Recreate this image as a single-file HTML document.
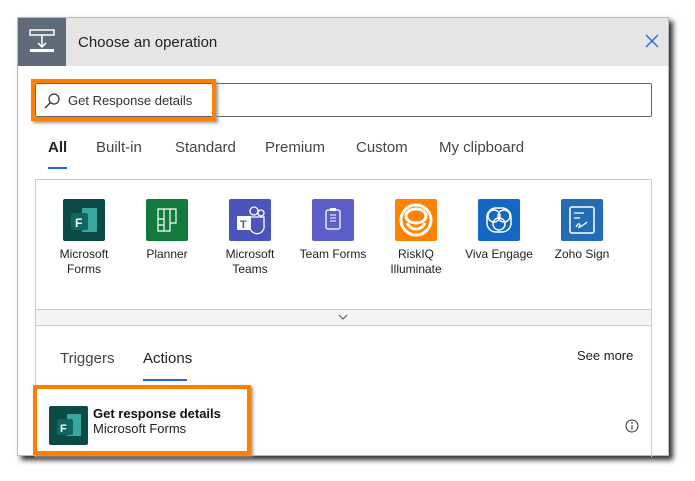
<!DOCTYPE html>
<html><head><style>
*{margin:0;padding:0;box-sizing:border-box}
body{width:695px;height:481px;background:#fff;position:relative;font-family:"Liberation Sans",sans-serif;overflow:hidden;color:#222}
.dlg{position:absolute;left:17px;top:17px;width:652px;height:439px;background:#fff;border:1px solid #bbb;box-shadow:4px 4px 5px #333}
.hdr{position:absolute;left:0;top:0;width:650px;height:48px;background:#e6e6e6}
.hic{position:absolute;left:0;top:0;width:48px;height:48px;background:#5f6b78}
.ab{position:absolute;font-size:12px;color:#222;text-align:center;width:80px;line-height:15px}
.ico{position:absolute;width:42px;height:42px;border-radius:2px;top:199px}
.tab{position:absolute;top:139px;font-size:15px;color:#444}
</style></head><body>
<div class="dlg">
 <div class="hdr">
  <div class="hic"><svg width="48" height="48"><rect x="12" y="12" width="24" height="5" fill="none" stroke="#fff" stroke-width="1.5"/><path d="M24 17v12M20 25l4 4 4-4" stroke="#fff" fill="none" stroke-width="1.5"/><rect x="12" y="31" width="24" height="3" fill="#fff"/></svg></div>
  <div style="position:absolute;left:60px;top:16px;font-size:15px;color:#222">Choose an operation</div>
  <svg style="position:absolute;left:626px;top:15px" width="16" height="16"><path d="M2 2l12 12M14 2L2 14" stroke="#2a6fdb" stroke-width="1.5"/></svg>
 </div>
</div>
<div style="position:absolute;left:35px;top:83px;width:617px;height:34px;border:1px solid #666;border-radius:2px"></div>
<div style="position:absolute;left:31px;top:79px;width:185px;height:42px;border:4px solid #ff8000;box-shadow:2px 2px 3px #999"></div>
<svg style="position:absolute;left:44px;top:93px" width="16" height="16"><circle cx="10" cy="6" r="5" fill="none" stroke="#333" stroke-width="1.2"/><path d="M6.5 9.5L1 15" stroke="#333" stroke-width="1.3"/></svg>
<div style="position:absolute;left:68px;top:93px;font-size:13px;color:#333">Get Response details</div>
<div class="tab" style="left:48px;color:#222;font-weight:bold">All</div>
<div style="position:absolute;left:48px;top:167px;width:19px;height:2px;background:#2266e3"></div>
<div class="tab" style="left:96px">Built-in</div>
<div class="tab" style="left:175px">Standard</div>
<div class="tab" style="left:265px">Premium</div>
<div class="tab" style="left:356px">Custom</div>
<div class="tab" style="left:439px">My clipboard</div>
<div style="position:absolute;left:35px;top:179px;width:617px;height:278px;border:1px solid #ccc;border-bottom:none"></div>
<div class="ico" style="left:63px;background:#0c4a45"><svg width="42" height="42"><rect x="19" y="9" width="15" height="24" fill="#3aa6a0"/><rect x="8" y="14" width="17" height="17" rx="2" fill="#11665f"/><text x="12" y="28" font-size="12" font-weight="bold" fill="#fff" font-family="Liberation Sans">F</text></svg></div>
<div class="ico" style="left:146px;background:#137a3e"><svg width="42" height="42"><path d="M12 10h18v14h-6v8h-12z M18 10v22 M24 10v14 M12 20h6 M12 26h6" fill="none" stroke="#fff" stroke-width="1.2"/></svg></div>
<div class="ico" style="left:229px;background:#4b53bc"><svg width="42" height="42"><circle cx="25" cy="12" r="4" fill="none" stroke="#fff" stroke-width="1.3"/><circle cx="32" cy="14" r="3" fill="none" stroke="#fff" stroke-width="1.3"/><path d="M19 18h16v8a7 7 0 0 1-14 3" fill="none" stroke="#fff" stroke-width="1.3"/><rect x="8" y="17" width="14" height="14" rx="1" fill="#fff"/><text x="11" y="29" font-size="11" font-weight="bold" fill="#4b53bc" font-family="Liberation Sans">T</text></svg></div>
<div class="ico" style="left:312px;background:#5b5fc7"><svg width="42" height="42"><rect x="14" y="11" width="14" height="19" rx="2" fill="none" stroke="#fff" stroke-width="1.3"/><path d="M18 16h6M18 19h6M18 22h6" stroke="#fff"/><rect x="18" y="9" width="6" height="3" fill="#fff"/></svg></div>
<div class="ico" style="left:395px;background:#ff8200"><svg width="42" height="42"><g fill="none" stroke="#fff" stroke-width="3"><circle cx="21" cy="21" r="15"/><ellipse cx="21" cy="17" rx="10" ry="7"/><path d="M12 24c4 8 14 8 18 0"/></g></svg></div>
<div class="ico" style="left:478px;background:#1568c2"><svg width="42" height="42"><g fill="none" stroke="#fff" stroke-width="1.5"><circle cx="16" cy="17" r="6"/><circle cx="26" cy="17" r="6"/><circle cx="21" cy="25" r="6"/><rect x="9" y="9" width="24" height="24" rx="9"/></g></svg></div>
<div class="ico" style="left:561px;background:#226db4"><svg width="42" height="42"><rect x="9" y="8" width="24" height="26" rx="2" fill="none" stroke="#fff" stroke-width="1.5"/><path d="M13 14h10M13 19h6M15 28c3-6 5-2 3 0s6-3 8-5" fill="none" stroke="#fff" stroke-width="1.3"/></svg></div>
<div class="ab" style="left:44px;top:247px">Microsoft<br>Forms</div>
<div class="ab" style="left:127px;top:247px">Planner</div>
<div class="ab" style="left:210px;top:247px">Microsoft<br>Teams</div>
<div class="ab" style="left:293px;top:247px">Team Forms</div>
<div class="ab" style="left:376px;top:247px">RiskIQ<br>Illuminate</div>
<div class="ab" style="left:459px;top:247px">Viva Engage</div>
<div class="ab" style="left:542px;top:247px">Zoho Sign</div>
<div style="position:absolute;left:36px;top:309px;width:615px;height:17px;background:#f4f4f4;border-top:1px solid #ccc;border-bottom:1px solid #ccc"></div>
<svg style="position:absolute;left:338px;top:313px" width="10" height="8"><path d="M1 2l4 4 4-4" fill="none" stroke="#555"/></svg>
<div class="tab" style="left:60px;top:350px">Triggers</div>
<div class="tab" style="left:143px;top:350px;color:#222">Actions</div>
<div style="position:absolute;left:143px;top:379px;width:44px;height:2px;background:#2266e3"></div>
<div style="position:absolute;left:577px;top:348px;font-size:13px;color:#222">See more</div>
<div style="position:absolute;left:33px;top:385px;width:218px;height:70px;border:4px solid #ff8000;box-shadow:2px 2px 3px #999;background:#fff"></div>
<div style="position:absolute;left:49px;top:406px;width:39px;height:39px;background:#0c4a45;border-radius:2px"><svg width="39" height="39"><rect x="18" y="8" width="14" height="22" fill="#3aa6a0"/><rect x="8" y="13" width="16" height="16" rx="2" fill="#11665f"/><text x="11" y="26" font-size="11" font-weight="bold" fill="#fff" font-family="Liberation Sans">F</text></svg></div>
<div style="position:absolute;left:93px;top:406px;font-size:13px;font-weight:bold;color:#111">Get response details</div>
<div style="position:absolute;left:93px;top:421px;font-size:13px;color:#222">Microsoft Forms</div>
<svg style="position:absolute;left:625px;top:419px" width="14" height="14"><circle cx="7" cy="7" r="6" fill="none" stroke="#333"/><path d="M7 6v5" stroke="#333"/><circle cx="7" cy="4" r=".8" fill="#333"/></svg>
</body></html>
